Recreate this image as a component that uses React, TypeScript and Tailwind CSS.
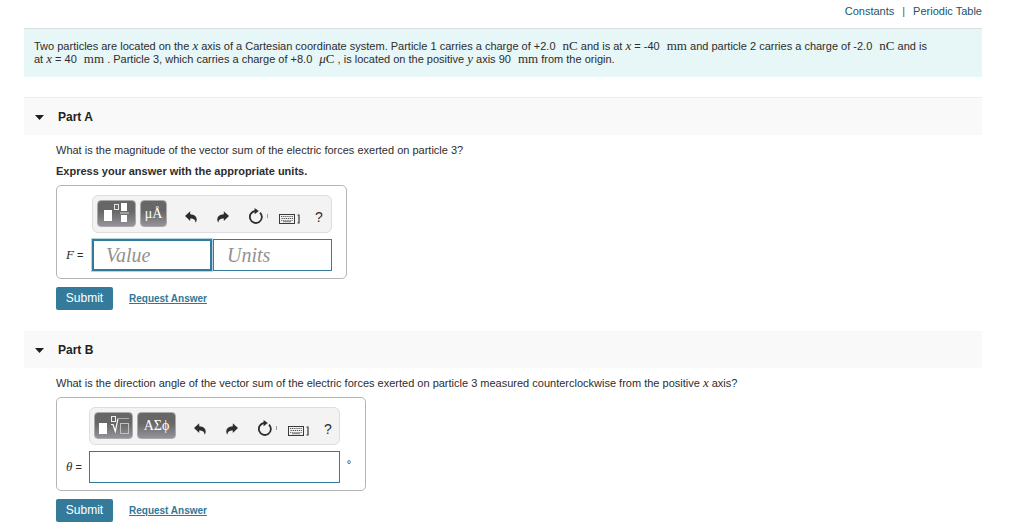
import { useState, type ReactNode } from "react";

function Var({ children }: { children: ReactNode }) {
  return <i className="font-['Liberation_Serif',serif] text-[13px] leading-3">{children}</i>;
}

function Unit({ children }: { children: ReactNode }) {
  return <span className="ml-1 font-['Liberation_Serif',serif] text-[13px] leading-3">{children}</span>;
}

function UndoIcon({ flip = false }: { flip?: boolean }) {
  return (
    <svg width="12" height="12" viewBox="0 0 12 12" fill="#2d2d2d" className={flip ? "-scale-x-100" : ""} aria-hidden="true">
      <path d="M0 5 5.2.3v2.9c4.2.2 6.8 2.6 6.5 5.8-.1 1.1-.5 2-1.2 2.8.1-3-1.5-4.3-5.3-4.4v2.5z" />
    </svg>
  );
}

function ResetIcon() {
  return (
    <svg width="14" height="16" viewBox="0 0 14 16" fill="none" aria-hidden="true">
      <path d="M11 4.6A6 6 0 1 1 6.2 3" stroke="#2d2d2d" strokeWidth="1.8" />
      <path d="M5.6 0 9.8 3.1 5.6 6.2z" fill="#2d2d2d" />
    </svg>
  );
}

function KeyboardIcon() {
  return (
    <svg width="22" height="12" viewBox="0 0 22 12" fill="none" aria-hidden="true">
      <rect x=".5" y="1.5" width="15" height="9" stroke="#3a3a3a" />
      <path d="M2 3.5h12M2.5 5.5h11.5" stroke="#555" strokeDasharray="1.3 .8" />
      <path d="M2 7.5h12" stroke="#777" strokeDasharray="1.3 .8" />
      <path d="M4 8.7h8" stroke="#777" />
      <path d="M18.5 2h1.5v8h-1.5" stroke="#3a3a3a" strokeWidth="1.2" />
    </svg>
  );
}

function FractionIcon() {
  return (
    <svg width="26" height="22" viewBox="0 0 26 22" fill="none" aria-hidden="true">
      <path d="M0 8h8v11H0zM17 1h6v8h-6zM17 13h6v7h-6z" fill="#fff" />
      <rect x="10.5" y="2.5" width="4" height="5" stroke="#e5e5e5" />
      <path d="M16 11h9" stroke="#d5d5d5" />
    </svg>
  );
}

function RootIcon() {
  return (
    <svg width="30" height="22" viewBox="0 0 30 22" fill="none" aria-hidden="true">
      <path d="M0 9h8v11H0z" fill="#fff" />
      <rect x="12.5" y="2.5" width="4" height="5" stroke="#eee" />
      <path d="M12 10.5h2l2.3 7L19 4.5" stroke="#fff" strokeWidth="1.2" />
      <path d="M19 4.5h11" stroke="#aaa" />
      <rect x="21.5" y="9.5" width="8" height="10" stroke="#c2c2c6" />
    </svg>
  );
}

function Toolbar({ children }: { children: ReactNode }) {
  return (
    <div className="flex h-[38px] items-center rounded-md border border-[#dedede] bg-[#f3f3f3] pr-[7px] pb-0.5 pl-1">
      <div className="flex gap-1">{children}</div>
      <button type="button" aria-label="Undo" className="ml-[18px] flex pt-2"><UndoIcon /></button>
      <button type="button" aria-label="Redo" className="ml-5 flex pt-2"><UndoIcon flip /></button>
      <button type="button" aria-label="Reset" className="ml-5 flex items-center gap-1 pt-[6px]">
        <ResetIcon />
        <span className="h-1 w-px bg-[#999]" />
      </button>
      <button type="button" aria-label="Keyboard shortcuts" className="ml-[11px] flex pt-3"><KeyboardIcon /></button>
      <button type="button" aria-label="Help" className="ml-[14px] pt-2 text-[14px] leading-4 text-[#2d2d2d]">?</button>
    </div>
  );
}

const paletteButton =
  "flex h-[27px] items-center justify-center rounded border border-[#aaa] bg-linear-to-b from-[#676767] from-40% to-[#93939a] text-white";

function Part({ name, divided = false, children }: { name: string; divided?: boolean; children: ReactNode }) {
  const [open, setOpen] = useState(true);
  return (
    <section>
      <h2 className={`bg-[#f9f9f9] ${divided ? "border-t border-[#eeeeee]" : ""}`}>
        <button
          type="button"
          aria-expanded={open}
          onClick={() => setOpen(!open)}
          className="flex h-[37px] w-full items-center gap-[14px] px-[11px] pt-0.5 text-left text-[12px] font-bold text-[#222]"
        >
          <svg width="9" height="5" viewBox="0 0 9 5" className={open ? "" : "-rotate-90"} aria-hidden="true">
            <path d="M0 0h9L4.5 5z" fill="#1d1d1d" />
          </svg>
          {name}
        </button>
      </h2>
      {open && <div className="pl-8">{children}</div>}
    </section>
  );
}

function Actions() {
  return (
    <div className="mt-2 flex items-center gap-4">
      <button type="submit" className="h-[23px] w-[57px] rounded-xs bg-[#347a9a] text-[12px] text-white">Submit</button>
      <a href="#answer" className="text-[10px] font-bold text-[#2f7897] underline">Request Answer</a>
    </div>
  );
}

const answerBox = "flex w-fit items-end rounded-[5px] border border-[#b3b3b3] pb-[7px] pl-[9px]";

export default function App() {
  return (
    <main className="bg-white pr-[42px] pl-6 font-['Liberation_Sans',Arial,sans-serif] text-[11px] leading-[13px] text-[#2d2d2d]">
      <nav className="flex h-7 items-start justify-end gap-2 pt-[5px] text-[11px] text-[#1d5468]">
        <a href="#constants">Constants</a>
        <span className="text-[#555]">|</span>
        <a href="#periodic-table">Periodic Table</a>
      </nav>

      <p className="mb-5 min-h-[49px] border-t border-[#dcdfdf] bg-[#e7f6f6] pt-[11px] pr-12 pb-[11px] pl-[10px]">
        Two particles are located on the <Var>x</Var> axis of a Cartesian coordinate system. Particle 1 carries a charge of +2.0{" "}
        <Unit>nC</Unit> and is at <Var>x</Var> = -40 <Unit>mm</Unit> and particle 2 carries a charge of -2.0 <Unit>nC</Unit> and is
        at <Var>x</Var> = 40 <Unit>mm</Unit> . Particle 3, which carries a charge of +8.0 <Unit><i>μ</i>C</Unit> , is located on the
        positive <Var>y</Var> axis 90 <Unit>mm</Unit> from the origin.
      </p>

      <Part name="Part A" divided>
        <p className="pt-[9px]">What is the magnitude of the vector sum of the electric forces exerted on particle 3?</p>
        <p className="pt-2 font-bold">Express your answer with the appropriate units.</p>
        <form onSubmit={(e) => e.preventDefault()} className="mt-[7px] mb-[21px]">
          <div className={`${answerBox} pt-[9px] pr-[14px]`}>
            <label htmlFor="force-value" className="w-[26px] pb-[9px]">
              <Var>F</Var> =
            </label>
            <div className="flex flex-col gap-[6px]">
              <Toolbar>
                <button type="button" aria-label="Templates" className={`${paletteButton} w-[39px]`}><FractionIcon /></button>
                <button type="button" aria-label="Unit symbols" className={`${paletteButton} w-[27px] font-['Liberation_Serif',serif] text-[14px]`}>μÅ</button>
              </Toolbar>
              <div className="flex gap-px">
                <input
                  id="force-value"
                  placeholder="Value"
                  className="h-8 w-[120px] border-2 border-[#347a9a] px-3 font-['Liberation_Serif',serif] text-[20px] outline-1 outline-[#b5d5e2] placeholder:text-[#929292] placeholder:italic"
                />
                <input
                  aria-label="Units"
                  placeholder="Units"
                  className="h-8 w-[119px] border border-[#347a9a] px-[13px] font-['Liberation_Serif',serif] text-[20px] placeholder:text-[#929292] placeholder:italic"
                />
              </div>
            </div>
          </div>
          <Actions />
        </form>
      </Part>

      <Part name="Part B">
        <p className="pt-[9px]">
          What is the direction angle of the vector sum of the electric forces exerted on particle 3 measured counterclockwise from the
          positive <Var>x</Var> axis?
        </p>
        <form onSubmit={(e) => e.preventDefault()} className="mt-[7px]">
          <div className={`${answerBox} pt-[9px] pr-[14px]`}>
            <label htmlFor="angle" className="w-[23px] pb-[9px]">
              <Var>θ</Var> =
            </label>
            <div className="flex flex-col gap-[6px]">
              <Toolbar>
                <button type="button" aria-label="Math templates" className={`${paletteButton} w-[39px]`}><RootIcon /></button>
                <button type="button" aria-label="Greek letters" className={`${paletteButton} w-[39px] font-['Liberation_Serif',serif] text-[14px]`}>ΑΣϕ</button>
              </Toolbar>
              <input id="angle" className="h-8 w-0 min-w-full border border-[#347a9a] px-3 font-['Liberation_Serif',serif] text-[20px]" />
            </div>
            <span className="pb-3 pl-[7px]">°</span>
          </div>
          <Actions />
        </form>
      </Part>
    </main>
  );
}
